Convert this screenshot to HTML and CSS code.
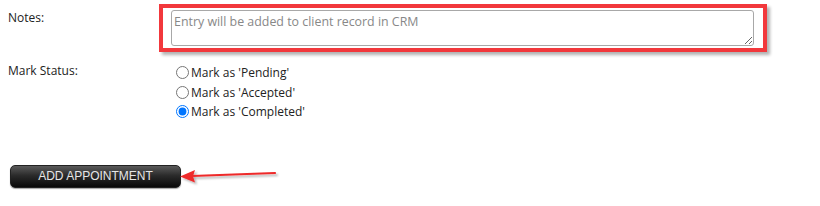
FILE: index.html
```html
<!DOCTYPE html>
<html>
<head>
<meta charset="utf-8">
<link rel="stylesheet" href="styles.css">
</head>
<body>
<div class="page">
  <form class="form">
    <div class="label notes-label">Notes:</div>
    <div class="highlight">
      <textarea class="notes" placeholder="Entry will be added to client record in CRM"></textarea>
    </div>
    <div class="label status-label">Mark Status:</div>
    <div class="radios">
      <label class="radio"><input type="radio" name="st">Mark as 'Pending'</label>
      <label class="radio"><input type="radio" name="st">Mark as 'Accepted'</label>
      <label class="radio"><input type="radio" name="st" checked>Mark as 'Completed'</label>
    </div>
  </form>
  <div class="actions">
    <button class="btn" type="button">ADD APPOINTMENT</button>
    <svg class="arrow" width="110" height="24" viewBox="0 0 110 24">
      <defs>
        <filter id="sh" x="-10%" y="-50%" width="120%" height="200%">
          <feDropShadow dx="2" dy="2" stdDeviation="1.2" flood-color="#000" flood-opacity="0.3"/>
        </filter>
      </defs>
      <g filter="url(#sh)">
        <line x1="14" y1="11" x2="97" y2="8" stroke="#ee2a2a" stroke-width="2.2" stroke-linecap="round"/>
        <polygon points="2,11.5 17,5 15,11.2 17,17.5" fill="#ee2a2a"/>
      </g>
    </svg>
  </div>
</div>
</body>
</html>
```
FILE: styles.css
```css
html, body { margin: 0; padding: 0; background: #fff; }
.page {
  width: 820px;
  height: 206px;
  padding: 4px 0 0 8px;
  box-sizing: border-box;
  font-family: "Open Sans", "DejaVu Sans", sans-serif;
  font-size: 12px;
  color: #222;
}
.form {
  display: grid;
  grid-template-columns: 151px 608px;
  row-gap: 9px;
}
.label { line-height: 18px; }
.notes-label { padding-top: 5px; }
.status-label { padding-top: 1px; }
.highlight {
  border: 4px solid #f2383c;
  padding: 2px 8px;
  box-shadow: 3px 3px 3px rgba(0,0,0,0.3);
  display: flex;
}
.notes {
  width: 583px;
  height: 36px;
  box-sizing: border-box;
  border: 1px solid #a8a8a8;
  border-radius: 3px;
  padding: 2px 2px;
  margin: 0;
  font-family: inherit;
  font-size: 12.4px;
  resize: vertical;
}
.notes::placeholder { color: #888; }
.radios {
  padding: 2px 0 0 16px;
  display: flex;
  flex-direction: column;
}
.radio {
  display: flex;
  align-items: center;
  height: 19.5px;
  line-height: 19px;
}
.radio input {
  width: 13px;
  height: 13px;
  margin: 0 2px 0 1px;
}
.actions {
  position: relative;
  margin-top: 43px;
  padding-left: 2px;
}
.btn {
  width: 171px;
  height: 23px;
  border: 1px solid #222;
  border-radius: 5px;
  background: linear-gradient(#5a5a5a 0%, #2b2b2b 45%, #080808 100%);
  color: #e6e6e6;
  font-family: "Liberation Sans", Arial, sans-serif;
  font-size: 12px;
  letter-spacing: 0;
  padding: 0;
  box-shadow: 0 1px 1px rgba(0,0,0,0.35);
}
.arrow {
  position: absolute;
  left: 170px;
  top: 0;
}
```
